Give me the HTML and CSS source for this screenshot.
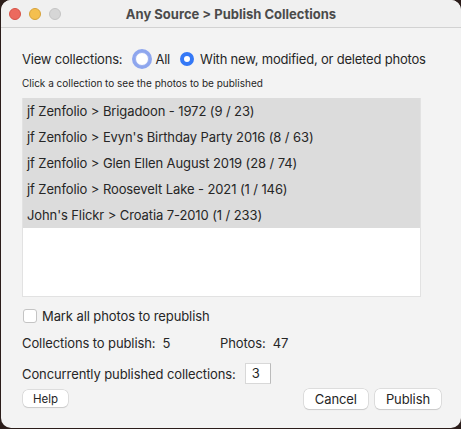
FILE: index.html
```html
<!DOCTYPE html>
<html>
<head>
<meta charset="utf-8">
<link rel="stylesheet" href="styles.css">
</head>
<body>
<div class="window">
  <div class="titlebar">
    <div class="lights">
      <span class="light red"></span>
      <span class="light yellow"></span>
      <span class="light grey"></span>
    </div>
    <div class="title">Any Source &gt; Publish Collections</div>
  </div>
  <div class="content">
    <div class="view-row">
      <span>View collections:</span>
      <span class="radio focus"></span>
      <span class="radio-label">All</span>
      <span class="radio checked"></span>
      <span class="radio-label">With new, modified, or deleted photos</span>
    </div>
    <div class="hint">Click a collection to see the photos to be published</div>
    <div class="list">
      <div class="row">jf Zenfolio &gt; Brigadoon - 1972 (9 / 23)</div>
      <div class="row">jf Zenfolio &gt; Evyn's Birthday Party 2016 (8 / 63)</div>
      <div class="row">jf Zenfolio &gt; Glen Ellen August 2019 (28 / 74)</div>
      <div class="row">jf Zenfolio &gt; Roosevelt Lake - 2021 (1 / 146)</div>
      <div class="row">John's Flickr &gt; Croatia 7-2010 (1 / 233)</div>
    </div>
    <div class="check-row">
      <span class="checkbox"></span>
      <span>Mark all photos to republish</span>
    </div>
    <div class="stats">
      <span class="stat-a">Collections to publish:&nbsp; 5</span>
      <span class="stat-b">Photos:&nbsp; 47</span>
    </div>
    <div class="conc-row">
      <span>Concurrently published collections:</span>
      <span class="numbox">3</span>
    </div>
    <div class="buttons">
      <button class="btn small">Help</button>
      <div class="spacer"></div>
      <button class="btn">Cancel</button>
      <button class="btn">Publish</button>
    </div>
  </div>
</div>
</body>
</html>
```

FILE: styles.css
```css
html, body {
  margin: 0;
  padding: 0;
  width: 461px;
  height: 429px;
  overflow: hidden;
  background: #2b1d1a;
}
body {
  font-family: Inter, "Noto Sans", sans-serif;
  font-size: 13px;
  color: #262626;
}
.window {
  margin-left: 1px;
  width: 460px;
  height: 428px;
  background: #f3f3f3;
  border-radius: 10px;
  overflow: hidden;
  display: flex;
  flex-direction: column;
}
.titlebar {
  height: 28px;
  box-sizing: border-box;
  border-bottom: 1px solid #d2d2d2;
  background: #f0f0f0;
  position: relative;
  display: flex;
  align-items: center;
  justify-content: center;
}
.lights {
  position: absolute;
  left: 8px;
  top: 8px;
  display: flex;
  gap: 8px;
}
.light {
  width: 12px;
  height: 12px;
  border-radius: 50%;
  box-sizing: border-box;
}
.red { background: #ec6a5e; border: 0.5px solid #d65247; }
.yellow { background: #f4bf4f; border: 0.5px solid #d6a23a; }
.grey { background: #d6d6d6; border: 0.5px solid #c4c4c4; }
.title {
  font-weight: 700;
  font-size: 13px;
  color: #4b4b4b;
  margin-top: 1px;
}
.content {
  padding: 0 0 0 21px;
  display: flex;
  flex-direction: column;
  white-space: nowrap;
  letter-spacing: -0.1px;
}
.view-row {
  display: flex;
  align-items: center;
  height: 20px;
  margin-top: 21px;
  letter-spacing: -0.2px;
}
.radio {
  width: 14px;
  height: 14px;
  border-radius: 50%;
  box-sizing: border-box;
  background: #fff;
  border: 1px solid #bdbdbd;
  margin-left: 12px;
  flex: none;
}
.radio.focus {
  margin-left: 13px;
  box-shadow: 0 0 0 3px #8ea6ee;
  border-color: #9bb0ef;
}
.radio.checked {
  background: #fff;
  border: 4px solid #3478f6;
  margin-left: 10px;
}
.radio-label {
  margin-left: 6px;
}
.hint {
  font-size: 10px;
  margin-top: 8px;
  color: #262626;
  letter-spacing: 0;
}
.list {
  margin-top: 9px;
  width: 399px;
  height: 199px;
  box-sizing: border-box;
  background: #fff;
  border: 1px solid #e2e2e2;
  border-top: none;
}
.row {
  height: 26px;
  line-height: 26px;
  background: #dcdcdc;
  padding-left: 4px;
}
.check-row {
  display: flex;
  align-items: center;
  margin-top: 12px;
  height: 14px;
}
.checkbox {
  width: 14px;
  height: 14px;
  box-sizing: border-box;
  border: 1px solid #c4c4c4;
  border-radius: 3px;
  background: #fff;
  margin-right: 5px;
  margin-left: 1px;
}
.stats {
  display: flex;
  margin-top: 12px;
  height: 16px;
  align-items: center;
}
.stat-a { width: 198px; }
.conc-row {
  display: flex;
  align-items: center;
  margin-top: 12px;
  height: 21px;
}
.numbox {
  margin-left: 9px;
  width: 26px;
  height: 21px;
  box-sizing: border-box;
  background: #fff;
  border: 1px solid #d8d8d8;
  border-right-color: #bbb;
  padding-left: 6px;
  line-height: 19px;
}
.buttons {
  display: flex;
  align-items: center;
  margin-top: 5px;
  width: 419px;
}
.spacer { flex: 1; }
.btn {
  font-family: inherit;
  font-size: 13px;
  letter-spacing: -0.1px;
  color: #262626;
  background: #fff;
  border: none;
  border-radius: 5px;
  box-shadow: 0 0 0 0.5px #c8c8c8, 0 1px 1px rgba(0,0,0,0.15);
  height: 20px;
  padding: 0 11px;
  margin-left: 7px;
}
.btn.small {
  font-size: 11.5px;
  letter-spacing: 0;
  height: 17px;
  padding: 0 10px;
  margin-left: 1px;
  margin-top: -1px;
}
```
